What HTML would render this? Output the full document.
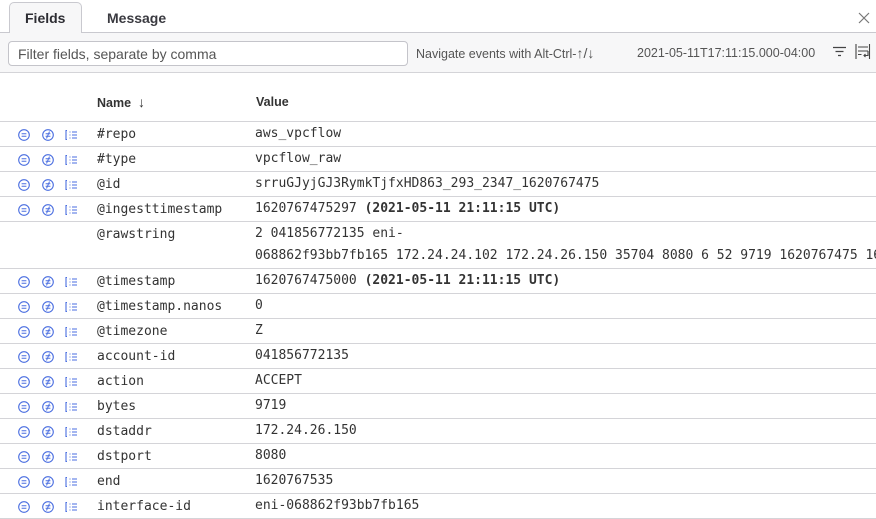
<!DOCTYPE html>
<html><head><meta charset="utf-8"><style>
*{margin:0;padding:0;box-sizing:border-box}
body{width:876px;height:501px;overflow:hidden;background:#fff;font-family:"Liberation Sans",sans-serif;color:#333;position:relative}
.abs{position:absolute}
.mono{font-family:"DejaVu Sans Mono","Liberation Mono",monospace;font-size:13px;color:#333;white-space:nowrap}
.row{position:absolute;left:0;width:876px;border-bottom:1px solid #d4d4d8;overflow:hidden}
.ic{position:absolute;top:7px}
b{font-weight:bold}
</style></head><body>
<div class="abs" style="left:0;top:32px;width:876px;height:1px;background:#c9c9cf"></div>
<div class="abs" style="left:9px;top:2px;width:73px;height:31px;border:1px solid #c9c9cf;border-bottom:none;border-radius:5px 5px 0 0;background:#f7f7f8"></div>
<div class="abs" style="left:25px;top:10px;font-size:14px;font-weight:bold;color:#2d2d33">Fields</div>
<div class="abs" style="left:107px;top:10px;font-size:14px;font-weight:bold;color:#3a3a40">Message</div>
<svg class="abs" style="left:858px;top:12px" width="12" height="12"><path d="M1 1L11 11M11 1L1 11" stroke="#777" stroke-width="1.2"/></svg>
<div class="abs" style="left:0;top:33px;width:876px;height:40px;background:#f7f7f8;border-bottom:1px solid #d4d4d8"></div>
<div class="abs" style="left:8px;top:41px;width:400px;height:25px;border:1px solid #c4c4ca;border-radius:4px;background:#fff"></div>
<div class="abs" style="left:18px;top:46px;font-size:14px;color:#555">Filter fields, separate by comma</div>
<div class="abs" style="left:416px;top:45px;font-size:12.5px;color:#555;white-space:nowrap">Navigate events with Alt-Ctrl-<span style="font-size:14px">↑/↓</span></div>
<div class="abs" style="left:637px;top:46px;font-size:12.5px;color:#555;white-space:nowrap">2021-05-11T17:11:15.000-04:00</div>
<svg class="abs" style="left:832px;top:45px" width="16" height="14"><path d="M1 2.5H14M3.5 6.5H11.5M6 10.5H9" stroke="#444" stroke-width="1.2"/></svg>
<svg class="abs" style="left:855px;top:43px" width="16" height="18"><path d="M1 1V16M14.5 1V16M3 4H13M3 8H13M3 11.5H6.5M13 8V12.5H9M10.5 11L9 12.5L10.5 14" stroke="#444" stroke-width="1.1" fill="none"/></svg>
<div class="row" style="top:74px;height:48px"></div>
<div class="abs" style="left:97px;top:94px;font-size:12.5px;font-weight:bold;color:#333">Name&nbsp; <span style="font-weight:normal;font-size:14px">↓</span></div>
<div class="abs" style="left:256px;top:95px;font-size:12.5px;font-weight:bold;color:#333">Value</div>
<div id="rows"></div>
<script>
var data=[["#repo","aws_vpcflow"],["#type","vpcflow_raw"],["@id","srruGJyjGJ3RymkTjfxHD863_293_2347_1620767475"],["@ingesttimestamp","1620767475297 <b>(2021-05-11 21:11:15 UTC)</b>"],["@rawstring","2 041856772135 eni-<br>068862f93bb7fb165 172.24.24.102 172.24.26.150 35704 8080 6 52 9719 1620767475 1620767535 ACCEPT OK",1],["@timestamp","1620767475000 <b>(2021-05-11 21:11:15 UTC)</b>"],["@timestamp.nanos","0"],["@timezone","Z"],["account-id","041856772135"],["action","ACCEPT"],["bytes","9719"],["dstaddr","172.24.26.150"],["dstport","8080"],["end","1620767535"],["interface-id","eni-068862f93bb7fb165"]];
var ic='<svg class="ic" style="left:18px" width="12" height="12"><circle cx="6" cy="6" r="5.3" fill="none" stroke="#4a6ee0" stroke-width="1.1"/><path d="M3.6 4.8H8.4M3.6 7.2H8.4" stroke="#4a6ee0" stroke-width="1"/></svg><svg class="ic" style="left:42px" width="12" height="12"><circle cx="6" cy="6" r="5.3" fill="none" stroke="#4a6ee0" stroke-width="1.1"/><path d="M3.6 4.8H8.4M3.6 7.2H8.4M7.5 2.6L4.5 9.4" stroke="#4a6ee0" stroke-width="1"/></svg><svg class="ic" style="left:65px" width="13" height="12"><path d="M2 1.5H1V10.5H2M4.5 3H5.5M4.5 6H5.5M4.5 9H5.5M7 3H12M7 6H12M7 9H12" stroke="#4a6ee0" stroke-width="1.1" fill="none"/></svg>';
var y=122,h='';
data.forEach(function(d){var H=d[2]?47:25;h+='<div class="row" style="top:'+y+'px;height:'+H+'px">'+(d[2]?'':ic)+'<div class="abs mono" style="left:97px;top:5px">'+d[0]+'</div><div class="abs mono" style="left:255px;top:1px;line-height:22px">'+d[1]+'</div></div>';y+=H;});
document.getElementById('rows').innerHTML=h;
</script>
</body></html>
